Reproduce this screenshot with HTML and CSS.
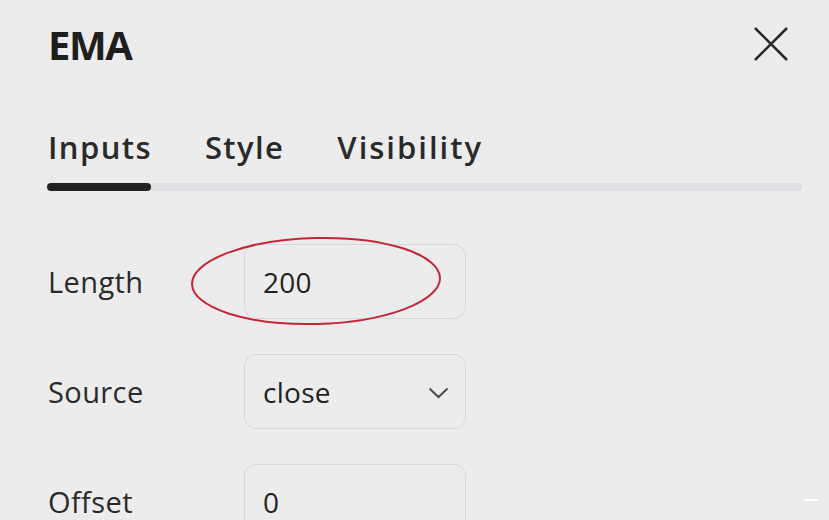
FILE: index.html
```html
<!DOCTYPE html>
<html>
<head>
<meta charset="utf-8">
<link rel="stylesheet" href="styles.css">
</head>
<body>
<div class="dialog">
  <div class="header">
    <h1 class="title">EMA</h1>
    <button class="close" aria-label="Close">
      <svg width="36" height="36" viewBox="0 0 36 36"><path d="M2 2L34 34M34 2L2 34" stroke="#2b2b2b" stroke-width="2.6" fill="none"/></svg>
    </button>
  </div>
  <div class="tabs">
    <div class="tab active">Inputs</div>
    <div class="tab">Style</div>
    <div class="tab wide">Visibility</div>
  </div>
  <div class="tabline"><div class="tabline-active"></div></div>
  <div class="rows">
    <div class="row">
      <div class="label">Length</div>
      <div class="field highlight">
        <span class="value">200</span>
        <svg class="ellipse" width="256" height="96" viewBox="0 0 256 96"><ellipse cx="128" cy="48" rx="124" ry="43" stroke="#c3273a" stroke-width="2" fill="none" transform="rotate(-1.5 128 48)"/></svg>
      </div>
    </div>
    <div class="row">
      <div class="label">Source</div>
      <div class="field select">
        <span class="value">close</span>
        <svg class="chev" width="21" height="12" viewBox="0 0 21 12"><path d="M1.5 1.5L10.5 10L19.5 1.5" stroke="#4a4a4a" stroke-width="2" fill="none"/></svg>
      </div>
    </div>
    <div class="row">
      <div class="label">Offset</div>
      <div class="field"><span class="value">0</span></div>
    </div>
  </div>
  <div class="mark"></div>
</div>
</body>
</html>
```
FILE: styles.css
```css
html, body {
  margin: 0;
  padding: 0;
  background: #ececec;
  width: 829px;
  height: 520px;
  overflow: hidden;
}
body {
  font-family: "Open Sans", "Noto Sans", sans-serif;
  color: #222;
}
.dialog {
  position: relative;
  height: 520px;
  padding: 0 27px 0 48px;
}
.header {
  display: flex;
  justify-content: space-between;
  align-items: center;
  height: 88px;
}
.title {
  margin: 0;
  font-size: 40px;
  font-weight: 700;
  letter-spacing: -1.4px;
  color: #1e1e1e;
}
.close {
  border: 0;
  background: none;
  padding: 0;
  margin-right: 13px;
  width: 36px;
  height: 36px;
}
.tabs {
  display: flex;
  gap: 53px;
  margin-top: 35px;
  height: 48px;
  align-items: center;
}
.tab {
  font-size: 31px;
  font-weight: 600;
  color: #2a2a2a;
  letter-spacing: 1.4px;
}
.tab.wide {
  letter-spacing: 2px;
}
.tabline {
  height: 8px;
  background: #dfe0e3;
  border-radius: 4px;
  margin-top: 12px;
  width: 754px;
}
.tabline-active {
  width: 104px;
  height: 8px;
  background: #232323;
  border-radius: 4px;
  margin-left: -1px;
}
.rows {
  display: flex;
  flex-direction: column;
  gap: 35px;
  margin-top: 53px;
}
.row {
  display: flex;
  align-items: center;
  height: 75px;
}
.label {
  width: 196px;
  font-size: 29px;
  letter-spacing: 0.4px;
  color: #2a2a2a;
}
.field {
  position: relative;
  box-sizing: border-box;
  width: 222px;
  height: 75px;
  border: 1.5px solid #d7d7d7;
  border-radius: 12px;
  display: flex;
  align-items: center;
  padding-left: 18px;
  font-size: 28px;
  letter-spacing: 0.3px;
  color: #222;
}
.select {
  justify-content: space-between;
  padding-right: 16px;
}
.ellipse {
  position: absolute;
  left: -57px;
  top: -12px;
}
.chev {
  margin-top: 2px;
}
.mark {
  position: absolute;
  right: 11px;
  bottom: 19px;
  width: 14px;
  height: 2px;
  background: #fff;
}
```
